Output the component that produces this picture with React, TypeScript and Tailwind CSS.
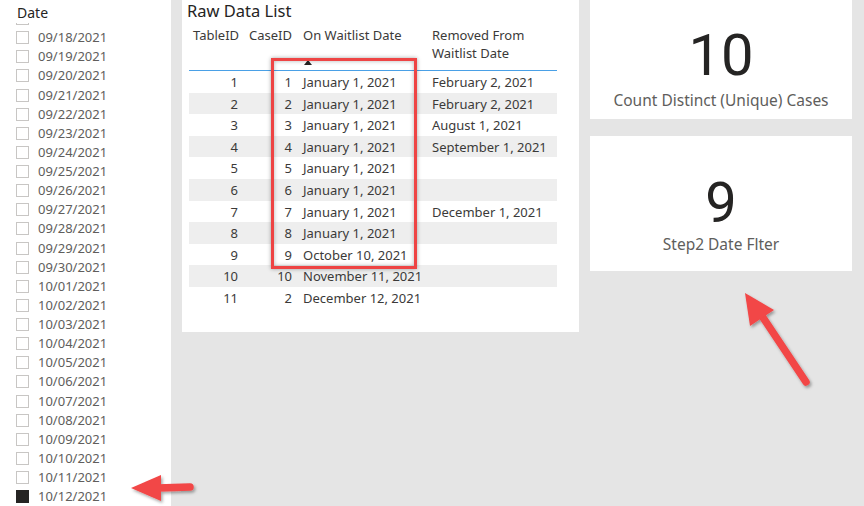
import React from "react";

const dates: string[] = [];
for (let d = 17; d <= 30; d++) dates.push(`09/${d}/2021`);
for (let d = 1; d <= 12; d++) dates.push(`10/${String(d).padStart(2, "0")}/2021`);

type Row = [number, number, string, string];
const rows: Row[] = [
  [1, 1, "January 1, 2021", "February 2, 2021"],
  [2, 2, "January 1, 2021", "February 2, 2021"],
  [3, 3, "January 1, 2021", "August 1, 2021"],
  [4, 4, "January 1, 2021", "September 1, 2021"],
  [5, 5, "January 1, 2021", ""],
  [6, 6, "January 1, 2021", ""],
  [7, 7, "January 1, 2021", "December 1, 2021"],
  [8, 8, "January 1, 2021", ""],
  [9, 9, "October 10, 2021", ""],
  [10, 10, "November 11, 2021", ""],
  [11, 2, "December 12, 2021", ""],
];

const font = { fontFamily: '"Noto Sans", "Open Sans", Arial, sans-serif' };

export default function App() {
  return (
    <div className="relative w-[864px] h-[506px] overflow-hidden bg-[#e5e5e5] flex" style={font}>
      {/* Slicer */}
      <div className="w-[171px] h-full bg-white flex flex-col">
        <div className="h-[23px] pl-[17px] pt-[3px] text-[14px] leading-[20px] text-[#252423] relative z-10 bg-white">Date</div>
        <div className="flex-1 overflow-hidden">
          <div className="-mt-[14.5px]">
            {dates.map((d, i) => {
              const checked = i === dates.length - 1;
              return (
                <div key={d} className="h-[19.125px] flex items-center pl-[16px] pt-[1px]">
                  <div
                    className={
                      checked
                        ? "w-[13px] h-[13px] bg-[#252423] border border-[#252423]"
                        : "w-[13px] h-[13px] border border-[#c8c6c4] bg-white"
                    }
                  />
                  <span className="ml-[9px] text-[13px] text-[#605e5c] leading-none">{d}</span>
                </div>
              );
            })}
          </div>
        </div>
      </div>

      {/* Table panel */}
      <div className="ml-[11px] w-[397px] h-[332px] bg-white relative">
        <div className="pl-[5px] text-[16.5px] leading-[21px] text-[#252423]">Raw Data List</div>
        <div className="ml-[7px] w-[368px] mt-[4px]">
          <div className="flex text-[13px] leading-[18px] text-[#3b3a39] h-[46px] border-b border-[#4aa0e6] relative">
            <div className="w-[55px] pl-[4px] pt-[1px]">TableID</div>
            <div className="w-[54px] pl-[5px] pt-[1px]">CaseID</div>
            <div className="w-[129px] pl-[5px] pt-[1px] relative">
              On Waitlist Date
              <div className="absolute left-[6px] top-[35px] w-0 h-0 border-l-[4px] border-r-[4px] border-b-[5px] border-l-transparent border-r-transparent border-b-[#252423]" />
            </div>
            <div className="w-[130px] pl-[5px] pt-[1px]">Removed From<br />Waitlist Date</div>
          </div>
          {rows.map((r, i) => (
            <div
              key={i}
              className={
                i % 2 === 1
                  ? "flex h-[21.6px] items-center pt-[2px] text-[13px] text-[#3b3a39] bg-[#eeeeee]"
                  : "flex h-[21.6px] items-center pt-[2px] text-[13px] text-[#3b3a39] bg-white"
              }
            >
              <div className="w-[55px] text-right pr-[6px]">{r[0]}</div>
              <div className="w-[54px] text-right pr-[6px]">{r[1]}</div>
              <div className="w-[129px] pl-[5px] whitespace-nowrap">{r[2]}</div>
              <div className="w-[130px] pl-[5px] whitespace-nowrap">{r[3]}</div>
            </div>
          ))}
        </div>
        {/* Red highlight */}
        <div className="absolute left-[89px] top-[58px] w-[146px] h-[211px] border-[3px] border-[#ee4444] shadow-[0_0_4px_rgba(0,0,0,0.35),inset_0_0_4px_rgba(0,0,0,0.3)]" />
      </div>

      {/* Cards */}
      <div className="ml-[11px] w-[262px] flex flex-col gap-[17px]">
        <div className="h-[119px] bg-white flex flex-col items-center">
          <div
            className="mt-[23px] text-[58px] leading-[64px] text-[#252423]"
            style={{ fontFamily: 'Roboto, "DejaVu Sans", sans-serif' }}
          >
            10
          </div>
          <div className="mt-[2px] text-[15.5px] leading-[22px] text-[#605e5c]">Count Distinct (Unique) Cases</div>
        </div>
        <div className="h-[135px] bg-white flex flex-col items-center">
          <div
            className="mt-[35px] text-[56px] leading-[64px] text-[#252423]"
            style={{ fontFamily: 'Roboto, "DejaVu Sans", sans-serif' }}
          >
            9
          </div>
          <div className="mt-[-2px] text-[15.5px] leading-[22px] text-[#605e5c]">Step2 Date Flter</div>
        </div>
      </div>

      {/* Arrows */}
      <svg className="absolute left-0 top-0 pointer-events-none" width="864" height="506" viewBox="0 0 864 506">
        <defs>
          <filter id="sh" x="-20%" y="-20%" width="140%" height="140%">
            <feDropShadow dx="1.5" dy="2" stdDeviation="1.5" floodColor="#000" floodOpacity="0.35" />
          </filter>
        </defs>
        <g filter="url(#sh)" fill="#f24646" stroke="#f24646">
          <line x1="190" y1="487" x2="158" y2="488" strokeWidth="7.5" strokeLinecap="round" />
          <polygon points="131,488 161,475 161,501" stroke="none" />
          <line x1="806" y1="382" x2="758" y2="310" strokeWidth="7.5" strokeLinecap="round" />
          <polygon points="745,293 774,310 750,326" stroke="none" />
        </g>
      </svg>
    </div>
  );
}
